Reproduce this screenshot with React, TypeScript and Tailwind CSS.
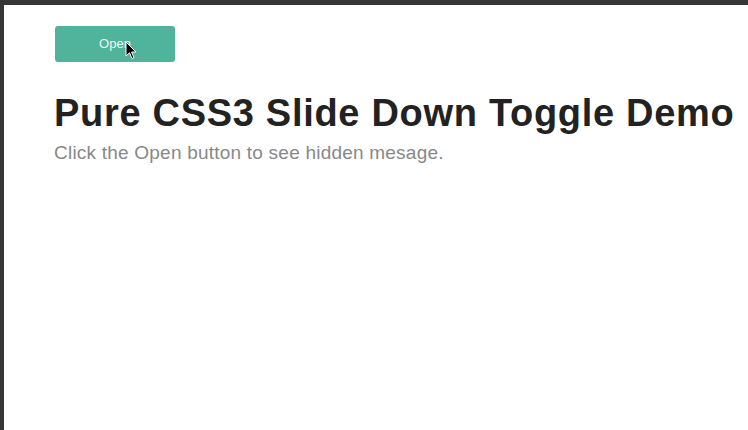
export default function App() {
  return (
    <div className="h-[430px] w-[748px] overflow-hidden bg-[#363639] pl-[4px] pt-[5px]">
      <div className="h-full bg-white pl-[50px] pt-[21px]" style={{ fontFamily: '"Liberation Sans", Arial, sans-serif' }}>
        <div className="relative ml-[1px] w-[120px]">
          <button className="flex h-[36px] w-[120px] items-center justify-center rounded-[3px] bg-[#4fb49b] text-[13px] text-[#eef8f5]">
            Open
          </button>
          {/* mouse pointer */}
          <svg
            className="absolute left-[70px] top-[15px]"
            width="12"
            height="19"
            viewBox="0 0 12 19"
          >
            <path
              d="M1 1 L1 15 L4.5 11.8 L7 17.5 L9 16.6 L6.6 11 L11 11 Z"
              fill="#000"
              stroke="#fff"
              strokeWidth="1"
              strokeLinejoin="round"
            />
          </svg>
        </div>
        <h1 className="mt-[32px] whitespace-nowrap text-[38px] font-bold leading-[38px] tracking-[0.7px] text-[#222]">
          Pure CSS3 Slide Down Toggle Demo
        </h1>
        <p className="mt-[9px] whitespace-nowrap text-[19px] leading-[24px] tracking-[0.22px] text-[#888]">
          Click the Open button to see hidden mesage.
        </p>
      </div>
    </div>
  )
}
